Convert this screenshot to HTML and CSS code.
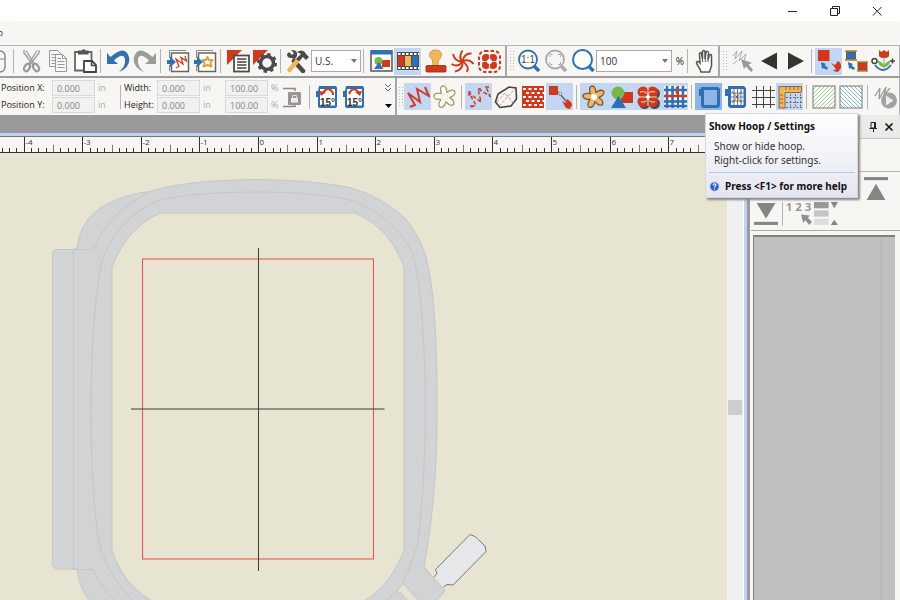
FILE: index.html
```html
<!DOCTYPE html>
<html lang="en">
<head>
<meta charset="utf-8">
<title>Embroidery Designer</title>
<link rel="stylesheet" href="styles.css">
</head>
<body>
<div class="app">
  <header class="titlebar">
    <button class="win-btn" aria-label="Minimize"><svg viewBox="0 0 12 12"><path d="M1 6.500H10" class="win-line"/></svg></button>
    <button class="win-btn" aria-label="Restore"><svg viewBox="0 0 12 12"><path d="M1.500 3.500H8.500V10.500H1.500ZM3.500 3.500V1.500H10.500V8.500H8.500" class="win-line"/></svg></button>
    <button class="win-btn" aria-label="Close"><svg viewBox="0 0 12 12"><path d="M2 2L10.500 10.500M10.500 2L2 10.500" class="win-line"/></svg></button>
  </header>
  <nav class="menubar"><a href="#help">Help</a></nav>

  <div class="toolbar toolbar-main">
    <div class="band band-edit">
      <button class="tool tool-cut-off" aria-label="Select"><svg viewBox="0 0 24 24"><rect x="6" y="2" width="12" height="21" rx="5" fill="#f8f7f4" stroke="#858585" stroke-width="1.400"/><path d="M6 10H18" stroke="#858585"/></svg></button>
      <i class="sep"></i>
      <button class="tool" aria-label="Cut"><svg viewBox="0 0 24 24"><g stroke="#9a9a9a" fill="none"><path d="M5 1L5 4L15 17M20 1L20 4L10 17" stroke-width="1.300"/><path d="M7 1.500L16 16M18 1.500L9 16" stroke-width="1.300"/><ellipse cx="8" cy="18.500" rx="2.500" ry="4" transform="rotate(32 8 18.500)" stroke-width="2.200"/><ellipse cx="17" cy="18.500" rx="2.500" ry="4" transform="rotate(-32 17 18.500)" stroke-width="2.200"/></g></svg></button>
      <button class="tool" aria-label="Copy"><svg viewBox="0 0 24 24"><g fill="#f8f7f4" stroke="#999"><path d="M3.500 1.500H11.500L15.500 5.500V17.500H3.500Z"/><path d="M5.500 5.500H10M5.500 8.500H13M5.500 11.500H13M5.500 14.500H13"/><path d="M9.500 5.500H16.500L20.500 9.500V22.500H9.500Z"/><path d="M16.500 5.500V9.500H20.500M11.500 9.500H15M11.500 12.500H18.500M11.500 15.500H18.500M11.500 18.500H18.500" fill="none"/></g></svg></button>
      <button class="tool" aria-label="Paste"><svg viewBox="0 0 24 24"><path d="M2 3H18.500V21.500H2Z" fill="#fff" stroke="#666" stroke-width="1.800"/><path d="M5 5.500H15.500V1.500H12.500Q10.500-1 8.500 1.500H5Z" fill="#555"/><path d="M11 12H19L23 16V23H11Z" fill="#fff" stroke="#444" stroke-width="1.800"/><path d="M18.500 12V16.500H23" fill="none" stroke="#444" stroke-width="1.500"/></svg></button>
      <i class="sep"></i>
      <button class="tool" aria-label="Undo"><svg viewBox="0 0 24 24"><path d="M1 4V15H12L8 11.500Q17 3 19 10Q20 17 13 23Q25 18 23 8Q19-5 4.500 8Z" fill="#2e6fb5"/></svg></button>
      <button class="tool" aria-label="Redo"><svg viewBox="0 0 24 24"><path d="M23 4V15H12L16 11.500Q7 3 5 10Q4 17 11 23Q-1 18 1 8Q5-5 19.500 8Z" fill="#9b9b9b"/></svg></button>
      <i class="sep"></i>
      <button class="tool" aria-label="Insert design"><svg viewBox="0 0 24 24"><path d="M3.500 9V1.500H20M3.500 16V22" fill="none" stroke="#888"/><path d="M5.500 4H22.500V22.500H5.500Z" fill="#fff" stroke="#666" stroke-width="1.500"/><path d="M10 19L13 17.500L10 10L17 15L15 8.500L20.500 12L19 7" fill="none" stroke="#d1391c" stroke-width="1.300"/><path d="M1 11H4V7.500L10 13L4 18V15H1Z" fill="#2e6fb5"/></svg></button>
      <button class="tool" aria-label="Insert artwork"><svg viewBox="0 0 24 24"><path d="M3.500 9V1.500H20M3.500 16V22" fill="none" stroke="#888"/><path d="M5.500 4H22.500V22.500H5.500Z" fill="#fff" stroke="#666" stroke-width="1.500"/><path d="M14.500 8L16 11L19.500 11L17.500 14L18.500 17.500L14.500 16L10.500 17.500L11.500 14L9.500 11L13 11Z" fill="#fff" stroke="#e0a040" stroke-width="2" stroke-linejoin="round"/><path d="M1 11H4V7.500L10 13L4 18V15H1Z" fill="#2e6fb5"/></svg></button>
      <i class="sep"></i>
      <button class="tool" aria-label="Design properties"><svg viewBox="0 0 24 24"><path d="M1 1H16L1 16Z" fill="#d1391c"/><rect x="8" y="6.500" width="15" height="16" fill="#fff" stroke="#4d4d4d" stroke-width="1.800"/><path d="M11 10H20.500M11 13H20.500M11 16H20.500M11 19H20.500" stroke="#444" stroke-width="1.500"/></svg></button>
      <button class="tool" aria-label="Object settings"><svg viewBox="0 0 24 24"><path d="M0 1H15L0 16Z" fill="#d1391c"/><circle cx="14" cy="14" r="6.500" fill="#f8f7f4" stroke="#4a4a4a" stroke-width="3.600"/><circle cx="14" cy="14" r="8.800" fill="none" stroke="#4a4a4a" stroke-width="2.400" stroke-dasharray="3.400 3.500"/></svg></button>
      <i class="sep"></i>
      <button class="tool" aria-label="Options"><svg viewBox="0 0 24 24"><path d="M8 12L17 22" stroke="#4a4a4a" stroke-width="4.500" stroke-linecap="round"/><path d="M1 5L3 3L6 6L8 4L5 1Q12 0 11 7L9 10L5 9Q1 9 1 5Z" fill="#4a4a4a"/><path d="M13 10L3.500 21" stroke="#f0b65c" stroke-width="4.500" stroke-linecap="round"/><path d="M11 3Q17-1 20 5L23 8L20 11L17 8L13 12L10 10L15 5Z" fill="#4a4a4a"/></svg></button>
      <label class="combo combo-units"><select aria-label="Units"><option>U.S.</option><option>Metric</option></select></label>
      <i class="sep"></i>
      <button class="tool" aria-label="Overview"><svg viewBox="0 0 24 24"><rect x="2" y="2" width="21" height="20" fill="#fff" stroke="#555" stroke-width="1.500"/><rect x="2" y="1" width="21" height="4.500" fill="#2e6fb5"/><rect x="13" y="11" width="8" height="7" fill="#d1391c"/><circle cx="9.500" cy="12" r="4" fill="#7ab648"/><path d="M10 13L14.500 20H5Z" fill="#2e6fb5"/></svg></button>
      <button class="tool tool-on" aria-label="Color film"><svg viewBox="0 0 24 24"><rect x="1" y="3" width="22" height="18" fill="#4d4d4d"/><rect x="2" y="7" width="6" height="10" fill="#d1391c"/><rect x="9" y="7" width="6" height="10" fill="#f0b65c"/><rect x="16" y="7" width="6" height="10" fill="#2e6fb5"/><path d="M2 5H23M2 19H23" stroke="#fff" stroke-width="2" stroke-dasharray="2.500 1.500"/></svg></button>
      <button class="tool" aria-label="Stamp"><svg viewBox="0 0 24 24"><path d="M10 17L9.500 11Q6 8 6.500 5Q8 .5 12.500 1Q18 .8 18.500 5.500Q18.500 9 15.500 11L15 17Z" fill="#f0b65c" stroke="#c98b2f" stroke-width=".7"/><rect x="3" y="16.500" width="20" height="6.500" rx="1" fill="#d1391c" stroke="#96270f" stroke-width=".8"/></svg></button>
      <button class="tool" aria-label="Swirl"><svg viewBox="0 0 24 24"><g fill="none" stroke="#d1391c" stroke-width="2"><path d="M12.500 12.500Q8 8 12.500 1.500"/><path d="M12.500 12.500Q14 4 21.500 4.500"/><path d="M12.500 12.500Q19 9 23.500 15"/><path d="M12.500 12.500Q20 17 17 23"/><path d="M12.500 12.500Q13 21 5 22.500"/><path d="M12.500 12.500Q8 19 1.500 15"/><path d="M12.500 12.500Q5 13 3 5"/></g></svg></button>
      <button class="tool" aria-label="Appliqué"><svg viewBox="0 0 24 24"><rect x="2" y="2" width="21" height="21" rx="6" fill="none" stroke="#d1391c" stroke-width="2" stroke-dasharray="3.500 2"/><g fill="#d1391c"><circle cx="9" cy="9" r="4"/><circle cx="16" cy="9" r="4"/><circle cx="9" cy="16" r="4"/><circle cx="16" cy="16" r="4"/></g><path d="M12.500 5V20M5 12.500H20" stroke="#f6dcd6" stroke-width="1.200"/><circle cx="12.500" cy="12.500" r="2.500" fill="#fff"/></svg></button>
    </div>

    <div class="band band-zoom">
      <i class="grip"></i>
      <button class="tool" aria-label="Zoom 1:1"><svg viewBox="0 0 24 24"><circle cx="11" cy="10.500" r="9" fill="#fff" stroke="#2e6fb5" stroke-width="1.800"/><path d="M17 17L22 22" stroke="#2e6fb5" stroke-width="3.500"/><text x="11" y="14" text-anchor="middle" class="icon-text">1:1</text></svg></button>
      <button class="tool" aria-label="Zoom to fit"><svg viewBox="0 0 24 24"><g stroke="#aaa" fill="none"><circle cx="11" cy="10.500" r="9" stroke-width="1.800"/><path d="M17 17L22 22" stroke-width="3.500"/><path d="M6 8V5.500H8.500M14 5.500H16.500V8M6 13V15.500H8.500M14 15.500H16.500V13"/></g></svg></button>
      <button class="tool" aria-label="Zoom"><svg viewBox="0 0 24 24"><circle cx="11.500" cy="10.500" r="9.500" fill="#fff" stroke="#2e6fb5" stroke-width="2"/><path d="M17.500 17L22.500 22" stroke="#2e6fb5" stroke-width="3.500"/></svg></button>
      <label class="combo combo-zoom"><select aria-label="Zoom factor"><option>100</option><option>200</option></select></label>
      <span class="unit-zoom">%</span>
      <i class="sep"></i>
      <button class="tool" aria-label="Pan"><svg viewBox="0 0 24 24"><path d="M8 23C7 18 3 16 3.500 13Q5 11.500 7 14L6.500 5Q7 2.500 8.500 4.500L9.500 10V2.500Q10.500 .5 12 2.500V10L13 3Q14.500 1.500 15.500 3.500L15 10.500L16.500 6Q18.500 4.500 18.500 7V17L16.500 23Z" fill="#fff" stroke="#555" stroke-width="1.500"/><path d="M9.500 9V13M12.300 9V13M15 9V13" stroke="#555"/></svg></button>
    </div>

    <div class="band band-travel">
      <i class="grip"></i>
      <button class="tool" aria-label="Travel to stitch"><svg viewBox="0 0 24 24"><path d="M3 7L7 2L5 10L12 2L9 12L16 5L14 12M3 15L7 12" fill="none" stroke="#aaa"/><path d="M11 10L22 14L18.500 15.500L23 21L21 23L16 17.500L14 20Z" fill="#999"/></svg></button>
      <button class="tool" aria-label="Previous"><svg viewBox="0 0 24 24"><path d="M4 12L20 3.500V20.500Z" fill="#333"/></svg></button>
      <button class="tool" aria-label="Next"><svg viewBox="0 0 24 24"><path d="M20 12L4 3.500V20.500Z" fill="#333"/></svg></button>
      <i class="sep"></i>
      <button class="tool tool-on" aria-label="Sequence by object"><svg viewBox="0 0 24 24"><rect x="1" y="1" width="11.500" height="11" fill="#d1391c"/><path d="M14 14L18 16L21 12Q25 14 24 19L21 23L16 22L19 20Z" fill="#d1391c"/><path d="M4 13L9 15L7.500 16.500L10.500 18V21L6 19L5 20Z" fill="#2e6fb5"/></svg></button>
      <button class="tool" aria-label="Sequence by color"><svg viewBox="0 0 24 24"><path d="M1 1H13V3H12V10H13V12H1V10H2V3H1Z" fill="#cf9a45"/><rect x="2.500" y="3" width="9" height="7" fill="#2e6fb5" stroke="#555" stroke-width=".8"/><path d="M13 12H24V14H23V21H24V23H13V21H14V14H13Z" fill="#cf9a45"/><rect x="14" y="14" width="9" height="7" fill="#d1391c" stroke="#555" stroke-width=".8"/><path d="M4 13L9 15L7.500 16.500L11 19L10 21L6 19L5 20Z" fill="#2e6fb5"/></svg></button>
      <button class="tool" aria-label="Motif"><svg viewBox="0 0 24 24"><path d="M8 1L10.500 3L13 1L15.500 3L18 1V7Q17 9 13 9Q9 9 8 7Z" fill="#d1391c"/><path d="M13 8V19M13 18Q8 17 7 12Q11 13 13 17Q15 13 19 12Q18 17 13 18Z" fill="#7ab648" stroke="#7ab648"/><circle cx="3.500" cy="12" r="2.500" fill="none" stroke="#444" stroke-width="1.500"/><path d="M19 12H24M21.500 9.500V14.500" stroke="#444" stroke-width="1.500"/><path d="M4 16Q12 26 20 16" fill="none" stroke="#2e6fb5" stroke-width="2"/></svg></button>
    </div>
  </div>

  <div class="toolbar toolbar-view">
    <div class="band band-geometry">
      <div class="fields fields-pos">
        <label for="px">Position X:</label><input id="px" value="0.000"><span>in</span>
        <label for="py">Position Y:</label><input id="py" value="0.000"><span>in</span>
      </div>
      <i class="sep"></i>
      <div class="fields fields-size">
        <label for="w">Width:</label><input id="w" value="0.000"><span>in</span><input value="100.00" aria-label="Width percent"><span>%</span>
        <label for="h">Height:</label><input id="h" value="0.000"><span>in</span><input value="100.00" aria-label="Height percent"><span>%</span>
      </div>
      <button class="tool" aria-label="Lock proportions"><svg viewBox="0 0 24 24"><path d="M2 3.500H14V6M2 21.500H14V19" fill="none" stroke="#888" stroke-width="1.500"/><rect x="7" y="7" width="13" height="13" rx="1" fill="#969696"/><rect x="10" y="13" width="7" height="4.500" fill="#eee"/><path d="M11.500 13V10.500H15.500V13" fill="none" stroke="#ddd"/></svg></button>
      <i class="sep"></i>
      <button class="tool" aria-label="Rotate left 15 degrees"><svg viewBox="0 0 24 24"><path d="M4 1H20Q22 1 22 3V21Q22 23 20 23H5Q3 23 3 21V12H1V6H3Z" fill="#2e6fb5"/><path d="M5 4H20V20.500H5Z" fill="#fff"/><path d="M8 8Q13 0 18 8V10" fill="none" stroke="#d1391c" stroke-width="2"/><path d="M4 6L11 7L6 11Z" fill="#d1391c"/><text x="12.500" y="20.500" text-anchor="middle" class="icon-bold">15°</text></svg></button>
      <button class="tool" aria-label="Rotate right 15 degrees"><svg viewBox="0 0 24 24"><path d="M4 1H20Q22 1 22 3V21Q22 23 20 23H5Q3 23 3 21V12H1V6H3Z" fill="#2e6fb5"/><path d="M5 4H20V20.500H5Z" fill="#fff"/><path d="M7 9Q11 0 17 8" fill="none" stroke="#d1391c" stroke-width="2"/><path d="M13 7L20 6L18 11Z" fill="#d1391c"/><text x="12.500" y="20.500" text-anchor="middle" class="icon-bold">15°</text></svg></button>
      <button class="overflow" aria-label="More buttons"><svg viewBox="0 0 8 28"><path d="M1 1L4 4L7 1M1 5L4 8L7 5" fill="none" stroke="#666"/><path d="M1 21H8L4.500 25Z" fill="#000"/></svg></button>
    </div>

    <div class="band band-show">
      <i class="grip"></i>
      <button class="tool tool-on" aria-label="Show stitches"><svg viewBox="0 0 24 24"><path d="M4 22L9 20L2 8L14 17L11 4L23 11L19 2" fill="none" stroke="#c8402a" stroke-width="2"/></svg></button>
      <button class="tool" aria-label="Show artistic view"><svg viewBox="0 0 24 24"><g fill="#fff" stroke="#b09566" stroke-width="1.400"><ellipse cx="12" cy="5.500" rx="3" ry="4.700" transform="rotate(-12 12 12)"/><ellipse cx="12" cy="5.500" rx="3" ry="4.700" transform="rotate(60 12 12)"/><ellipse cx="12" cy="5.500" rx="3" ry="4.700" transform="rotate(132 12 12)"/><ellipse cx="12" cy="5.500" rx="3" ry="4.700" transform="rotate(204 12 12)"/><ellipse cx="12" cy="5.500" rx="3" ry="4.700" transform="rotate(276 12 12)"/></g><circle cx="12" cy="12" r="4.500" fill="#fff"/><circle cx="12" cy="12" r="3" fill="none" stroke="#efe2cb"/></svg></button>
      <i class="sep"></i>
      <button class="tool tool-on" aria-label="Show needle points"><svg viewBox="0 0 24 24"><path d="M4 22L9 20L2 8L14 17L11 4L23 11L19 2" fill="none" stroke="#c8402a" stroke-width="1.500" stroke-dasharray="4 2"/><path d="M3 21H6M18 2H22M2 11V7H4M11 4H14" stroke="#c8402a" stroke-width="1.500" fill="none"/></svg></button>
      <button class="tool" aria-label="Show outlines"><svg viewBox="0 0 24 24"><path d="M1.500 17L4 9L15 2L22 3L22.500 14L17 21L6 22.500Z" fill="none" stroke="#444" stroke-width="1.600"/><path d="M3 17L11 8L20 19M5 21L21 4" fill="none" stroke="#df8b79" stroke-dasharray="3 1.500"/></svg></button>
      <button class="tool" aria-label="Show pattern fill"><svg viewBox="0 0 24 24"><rect x="1" y="1" width="22" height="22" fill="#d1391c"/><path d="M2 4H23M2 12H23M2 20H23" stroke="#fff" stroke-width="2" stroke-dasharray="3 2.500"/><path d="M5 8H23M5 16H23" stroke="#fff" stroke-width="2" stroke-dasharray="3 2.500"/></svg></button>
      <button class="tool tool-on" aria-label="Show connectors"><svg viewBox="0 0 24 24"><rect x="1" y="1" width="9" height="9" fill="#d1391c"/><path d="M10 7L19 17" stroke="#666" stroke-width="1.500"/><path d="M10 7L14 8L12 11Z" fill="#fff" stroke="#777" stroke-width=".8"/><path d="M14 16L18 18L19 14Q24 17 24 20L22 24L18 23Z" fill="#d1391c"/></svg></button>
      <i class="sep"></i>
      <button class="tool tool-on" aria-label="Show motifs"><svg viewBox="0 0 24 24"><g fill="#f0b65c" stroke="#6d5a3c" stroke-width="1.300"><ellipse cx="12" cy="5.500" rx="3" ry="4.700" transform="rotate(-12 12 12)"/><ellipse cx="12" cy="5.500" rx="3" ry="4.700" transform="rotate(60 12 12)"/><ellipse cx="12" cy="5.500" rx="3" ry="4.700" transform="rotate(132 12 12)"/><ellipse cx="12" cy="5.500" rx="3" ry="4.700" transform="rotate(204 12 12)"/><ellipse cx="12" cy="5.500" rx="3" ry="4.700" transform="rotate(276 12 12)"/></g><circle cx="12" cy="12" r="4.500" fill="#f0b65c"/><circle cx="12" cy="12" r="3" fill="#fff"/></svg></button>
      <button class="tool tool-on" aria-label="Show shapes"><svg viewBox="0 0 24 24"><rect x="12" y="7" width="12" height="11" fill="#d1391c"/><circle cx="9" cy="8" r="6.500" fill="#7ab648"/><path d="M9.500 11L17 23H2Z" fill="#2e6fb5"/></svg></button>
      <button class="tool tool-on" aria-label="Show appliqué"><svg viewBox="0 0 24 24"><g fill="#4a4a4a"><circle cx="18.500" cy="8.500" r="5.500"/><circle cx="8.500" cy="18.500" r="5.500"/><circle cx="18.500" cy="18.500" r="5.500"/></g><g fill="#d1391c"><circle cx="7" cy="7" r="5.500"/><circle cx="16.500" cy="7" r="5.500"/><circle cx="7" cy="16.500" r="5.500"/><circle cx="16.500" cy="16.500" r="5.500"/></g><path d="M12 3V21M3 12H21M4 7Q12 5 12 12Q12 18 19 17M19 7Q12 5 12 12Q12 18 5 17" stroke="#f5d9d3" stroke-width="1" fill="none"/><circle cx="12" cy="12" r="2" fill="#fff"/></svg></button>
      <button class="tool tool-on" aria-label="Show fabric"><svg viewBox="0 0 24 24"><rect x="1" y="1" width="23" height="22" fill="#fff"/><path d="M4 1V23M9.500 1V23M20 1V23M1 5H24M1 16.500H24M1 21H24" stroke="#2e6fb5" stroke-width="2.500"/><path d="M15 1V23" stroke="#2e6fb5" stroke-width="2"/><path d="M14 2V9M1 11H24" stroke="#d1391c" stroke-width="2.500"/></svg></button>
      <i class="sep"></i>
      <div class="tip-anchor">
        <button class="tool tool-hot" aria-label="Show hoop" aria-describedby="hoop-tip"><svg viewBox="0 0 24 24"><path d="M4 2H21L23 4V21L21 23H6L4 21V11H2V4H4Z" fill="#2e6fb5"/><rect x="7" y="5" width="13" height="15" rx="1" fill="#8fb4e6"/></svg></button>
        <div class="tooltip" id="hoop-tip" role="tooltip">
          <strong class="tip-title">Show Hoop / Settings</strong>
          <p class="tip-body">Show or hide hoop.<br>Right-click for settings.</p>
          <div class="tip-help"><svg viewBox="0 0 12 12"><circle cx="6" cy="6" r="5.500" fill="#b9cdf2"/><circle cx="6" cy="6" r="4.500" fill="#2b5fce"/><path d="M4.300 4.800Q4.500 3 6 3Q8 3.200 7.500 4.800Q6 5.500 6 7M6 8V9.300" fill="none" stroke="#fff" stroke-width="1.200"/></svg><strong>Press &lt;F1&gt; for more help</strong></div>
        </div>
      </div>
      <button class="tool" aria-label="Show hoop template"><svg viewBox="0 0 24 24"><path d="M4 1H20L22 3V21L20 23H6L4 21V11H1V4H4Z" fill="#2e6fb5"/><rect x="7" y="4" width="12.500" height="16" fill="#fff"/><path d="M7 8H19.500M7 12H19.500M7 16H19.500M10 4V20M13.500 4V20M17 4V20M8 6L18 18M18 6L8 18" stroke="#555" stroke-width=".8"/></svg></button>
      <button class="tool" aria-label="Show grid"><svg viewBox="0 0 24 24"><path d="M5.500 1V23M12.500 1V23M19.500 1V23M1 5.500H24M1 12.500H24M1 19.500H24" stroke="#444"/></svg></button>
      <button class="tool tool-on" aria-label="Show rulers"><svg viewBox="0 0 24 24"><path d="M1 1.500H23.500V7.500H7V23H1Z" fill="#f0b65c" stroke="#8a6a35"/><path d="M8 2V5M12 2V5M16 2V5M20 2V5M2 10H5M2 14H5M2 18H5" stroke="#8a6a35"/><path d="M12.500 9V23M17.500 9V23M22.500 9V23M8 12.500H24M8 17.500H24M8 22.500H24" stroke="#555" stroke-dasharray="2 1.500" stroke-width=".8"/></svg></button>
      <i class="sep"></i>
      <button class="tool" aria-label="Green hatch"><svg viewBox="0 0 24 24"><rect x="1" y="1" width="22" height="22" fill="#fff"/><path d="M1 5L5 1M1 9L9 1M1 13L13 1M1 17L17 1M1 21L21 1M3 23L23 3M7 23L23 7M11 23L23 11M15 23L23 15M19 23L23 19" stroke="#a5cf86"/><rect x="1" y="1" width="22" height="22" fill="none" stroke="#777"/></svg></button>
      <button class="tool" aria-label="Blue hatch"><svg viewBox="0 0 24 24"><rect x="1" y="1" width="22" height="22" fill="#fff"/><path d="M23 5L19 1M23 9L15 1M23 13L11 1M23 17L7 1M23 21L3 1M21 23L1 3M17 23L1 7M13 23L1 11M9 23L1 15M5 23L1 19" stroke="#82bdcf"/><rect x="1" y="1" width="22" height="22" fill="none" stroke="#777"/></svg></button>
      <i class="sep"></i>
      <button class="tool" aria-label="Stitch player"><svg viewBox="0 0 24 24"><path d="M2 11L7 3L6 14L13 2L11 10L17 3" fill="none" stroke="#999" stroke-width="1.300"/><circle cx="16" cy="15.500" r="8" fill="#a3a3a3"/><path d="M13 10.500L20.500 15.500L13 20.500Z" fill="#eee"/></svg></button>
    </div>
  </div>

  <main class="workspace">
    <section class="document">
      <div class="doc-gap"></div>
      <div class="doc-frame">
        <div class="doc-main">
          <svg class="ruler" id="ruler" aria-label="Horizontal ruler"></svg>
          <div class="doc-body">
            <svg class="canvas" aria-label="Design canvas">
              <g transform="translate(0 -153)">
                <g fill="#d2d3d5" stroke="#c5c6c8">
                  <path d="M77 250Q79 219 107 204Q126 194 150 191.500Q185 180 258 179.500Q310 180 350 187.500Q380 196 404 217Q419 234 426 257C437 300 437 370 437 409C437 449 436 500 424 567L445 591L436 601H418L404 583Q396 595 382 605H93Q79 590 77 569H56L52.500 566V252L54.500 249.500H73L77 248ZM161 213Q128 226 112 267V550Q120 575 136 589T161 605H355Q388 592 404 550V267Q390 228 355 213Z" fill-rule="evenodd"/>
                  <g fill="none">
                    <path d="M73.500 249V569M73.500 249.500H92Q95 248 99 239Q111 212 150 191.500M73.500 569.500H93Q100 586 115 600"/>
                    <path d="M258 192Q195 192 160 200Q120 216 103 257Q98 275 94 320Q91 360 91 409Q91 460 94 500Q97 537 101 550Q110 577 133 601M258 192Q320 192 353 201Q393 216 412 252Q417 265 421 305Q425.500 360 425.500 409Q425 480 419 534Q417 553 404 580"/>
                  </g>
                  <path d="M386 601L396 591.500L401 593L408 601Z"/>
                  <path d="M404 583L421 601H411L399 590Z" fill="#e7e4d1" stroke="none"/>
                  <path d="M403.500 579L424 568L445 591L436 601H419L403.500 584Z"/>
                  <path d="M405 577L421 560L424 569L410 580Z" stroke="none"/>
                </g>
                <path d="M435.500 569.500L434.500 575.500L443.500 587L447 584.500L453 585L486 551.500L485 546L475 536.500L470 534.500L435.500 569.500Z" fill="#e6e7e9"/>
                <path d="M434 577L437 573.500L435.500 569.500L470 534.500L475 536.500L485 546L486 551.500L453 585L447 584.500L443.500 587" fill="none" stroke="#77797a" stroke-width="1"/>
                <rect x="142.500" y="259" width="231" height="300" fill="none" stroke="#f04b48"/>
                <path d="M258.500 248V571" stroke="#3c3c3a"/>
                <path d="M131 409H384.500" stroke="#3c3c3a"/>
              </g>
            </svg>
            <div class="scrollbar"><div class="thumb"></div></div>
          </div>
        </div>
      </div>
    </section>

    <aside class="panel">
      <header class="panel-head">
        <button aria-label="Pin"><svg viewBox="0 0 10 10"><path d="M3 .5H7.500V6H3ZM6.500 1V6M1.500 6.500H9M5.500 6.500V10" fill="none" stroke="#222"/></svg></button>
        <button aria-label="Close panel"><svg viewBox="0 0 10 10"><path d="M1.500 1.500L8.500 8.500M8.500 1.500L1.500 8.500" stroke="#111" stroke-width="1.600"/></svg></button>
      </header>
      <div class="panel-tabs"></div>
      <div class="panel-tools">
        <div class="panel-row panel-row-top">
          <button class="seq" aria-label="Move to start"><svg viewBox="0 0 24 24"><path d="M1 2.500H24" stroke="#858585" stroke-width="3"/><path d="M12.500 7.500L21.500 23H3.500Z" fill="#858585"/></svg></button>
        </div>
        <div class="panel-row">
          <button class="seq" aria-label="Move to end"><svg viewBox="0 0 24 24"><path d="M12.500 17L21.500 2H3.500Z" fill="#858585"/><path d="M1 21.500H24" stroke="#858585" stroke-width="3"/></svg></button>
          <i class="sep"></i>
          <button class="seq" aria-label="Sequence by selects"><svg viewBox="0 0 24 24"><text x="11" y="10" text-anchor="middle" class="icon-digits">1 2 3</text><path d="M13.500 13L22 14L20 16L24 20L21.500 23L17.500 18.500L15.500 21Z" fill="#909090"/></svg></button>
          <button class="seq" aria-label="Sequence by color"><svg viewBox="0 0 24 24"><rect x="0" y="1" width="14" height="6" fill="#999"/><rect x="0" y="9" width="14" height="6" fill="#c6c6c6"/><rect x="0" y="17" width="14" height="6" fill="#dedede"/><path d="M16 1H23L19.500 7ZM16 23H23L19.500 18Z" fill="#858585"/></svg></button>
        </div>
      </div>
      <div class="sequence-list"><div class="list-edge"></div></div>
    </aside>
  </main>
</div>
<script src="ruler.js"></script>
</body>
</html>
```
FILE: styles.css
```css
* { box-sizing: border-box; }

body {
  margin: 0;
  background: #f8f6f2;
  color: #222;
  font: 9px/14px "Open Sans", "Noto Sans", sans-serif;
}

button, input, select { font: inherit; color: inherit; }
button { padding: 0; border: 0; background: none; flex: none; }
svg { display: block; }

.app { display: flex; flex-direction: column; height: 100vh; overflow: hidden; }

.titlebar { display: flex; justify-content: flex-end; height: 21px; background: #fff; padding-right: 2px; flex: none; }
.win-btn { display: grid; place-items: center; width: 42px; }
.win-btn svg { width: 12px; height: 12px; }
.win-line { fill: none; stroke: #222; }

.menubar { display: flex; justify-content: flex-end; align-items: center; width: 3px; height: 24px; flex: none; }
.menubar a { color: #333; text-decoration: none; }

.toolbar { display: flex; flex: none; border-top: 1px solid #b4b4b4; }
.toolbar-main { height: 31px; }
.toolbar-view { height: 39px; border-top: 2px solid #9c9c9c; }

.band { display: flex; align-items: center; flex: none; border-right: 2px solid #a8a8a8; }
.band-edit { width: 507px; }
.band-zoom { width: 213px; }
.band-travel, .band-show { flex: 1; border-right: 1px solid #b4b4b4; }
.band-geometry { width: 397px; padding-left: 1px; }

.tool { display: grid; place-items: center; width: 27px; height: 27px; }
.tool svg { width: 24px; height: 24px; }
.tool-cut-off { width: 11px; justify-content: end; }
.tool-on { background: #c3d6f2; }
.tool-hot { background: #8fb4e6; }

.sep { display: block; flex: none; width: 1px; height: 24px; margin: 0 3px; background: #b4b4b4; }
.band-edit .sep, .band-travel .sep { margin: 0 3px 0 2px; }
.grip { flex: none; width: 6px; height: 22px; margin-left: 2px; background: radial-gradient(circle, #b8b8b8 1px, transparent 1px) 0 0 / 3px 3px; }
.band-show .grip { margin-left: 1px; }

.combo { display: flex; flex: none; position: relative; }
.combo select {
  width: 100%; height: 22px; padding: 0 6px 0 3px; appearance: none;
  border: 1px solid #aaa; border-radius: 0; background: #fff; color: #333; font-size: 10px;
}
.combo::after {
  content: ""; position: absolute; right: 4px; top: 9px; pointer-events: none;
  border: 3px solid transparent; border-top: 4px solid #777; border-bottom: 0;
}
.combo-units { width: 50px; }
.combo-zoom { width: 76px; }
.unit-zoom { width: 12px; text-align: right; font-size: 10px; }

.icon-text { font: 10px "Liberation Sans", sans-serif; fill: #444; }
.icon-bold { font: bold 10px "Liberation Sans", sans-serif; fill: #333; }
.icon-digits { font: bold 11px "Open Sans", sans-serif; fill: #999; }

.fields { display: grid; align-items: center; row-gap: 1px; flex: none; }
.fields-pos { grid-template-columns: 51px 43px 22px; }
.fields-size { grid-template-columns: 33px 43px 25px 43px 11px; }
.fields input {
  width: 43px; height: 16px; padding: 0 4px; border: 1px solid #dadada; border-radius: 0;
  background: #f1f1f0; color: #858585;
}
.fields span { padding-left: 3px; color: #aaa; }
.overflow { margin-left: 17px; }
.overflow svg { width: 8px; height: 28px; }

.tip-anchor { position: relative; }
.tooltip {
  position: absolute; left: 10px; top: 30px; z-index: 5; width: 153px; padding: 5px 2px 4px 3px;
  background: linear-gradient(#fff, #e4e5f0); border: 1px solid #d8d8dc;
  box-shadow: 2px 2px 2px #888; color: #333; font: 10px/14px "Noto Sans", sans-serif; white-space: nowrap;
}
.tip-title { display: block; color: #111; }
.tip-body { margin: 6px 0 0; padding: 0 0 5px 5px; border-bottom: 1px solid #b3cce8; }
.tip-help { display: flex; align-items: center; gap: 5px; margin-top: 6px; color: #111; }
.tip-help svg { width: 11px; height: 11px; flex: none; }

.workspace { display: flex; flex: 1; min-height: 0; }
.document { display: flex; flex-direction: column; flex: 1; min-width: 0; }
.doc-gap { height: 18px; background: #9a9a9a; flex: none; }
.doc-frame {
  display: flex; flex: 1; min-height: 0; border-top: 3px solid #bdd0f0;
  border-right: 3px solid #bdd3f5;
}
.doc-main { display: flex; flex-direction: column; flex: 1; min-width: 0; }
.ruler { width: 100%; height: 17px; background: #f8f6f2; flex: none; border-top: 1px solid #777; }
.ruler text { font: 8px "Open Sans", sans-serif; fill: #333; }
.doc-body { display: flex; flex: 1; min-height: 0; }
.canvas { flex: 1; min-width: 0; height: 100%; background: #e7e4d1; }
.scrollbar { width: 17px; background: #f0f0f0; border-right: 1px solid #fff; border-left: 1px solid #f5f3ee; padding-top: 247px; }
.thumb { height: 15px; margin-right: 1px; background: #cdcdcd; }

.panel { display: flex; flex-direction: column; width: 153px; border-left: 3px solid #999; flex: none; }
.panel-head { display: flex; justify-content: flex-end; gap: 6px; align-items: center; height: 24px; padding-right: 6px; background: #eceae6; border-bottom: 1px solid #c4c4c4; }
.panel-head svg { width: 10px; height: 10px; }
.panel-tabs { height: 33px; border-bottom: 1px solid #b4b4b4; }
.panel-tools { display: flex; flex-direction: column; border-bottom: 1px solid #aaa; margin-left: 1px; padding: 4px 0; }
.panel-row { display: flex; align-items: center; gap: 2px; padding-left: 2px; }
.panel-row-top { justify-content: flex-end; padding-right: 12px; }
.panel-row .sep { margin: 0 2px; }
.seq svg { width: 25px; height: 25px; overflow: visible; }
.sequence-list { display: flex; justify-content: flex-end; flex: 1; margin: 4px 5px 0 3px; background: #c0c0c0; border: solid #808080; border-width: 2px 0 0 1px; }
.list-edge { width: 15px; border-left: 2px solid #bababa; }
```
FILE: ruler.js
```js
const ruler = document.getElementById("ruler");
const ns = "http://www.w3.org/2000/svg";
const zero = 258.5;
const inch = 58.6;

function add(name, attrs, text) {
  const el = document.createElementNS(ns, name);
  for (const key in attrs) el.setAttribute(key, attrs[key]);
  if (text !== undefined) el.textContent = text;
  ruler.appendChild(el);
}

const end = ruler.clientWidth;
const labelEnd = end - 20;
for (let i = -36; zero + i * inch / 8 < end; i++) {
  const x = Math.floor(zero + i * inch / 8) + 0.5;
  const major = i % 8 === 0;
  const top = major ? 0 : i % 4 === 0 ? 8 : 11;
  add("line", { x1: x, x2: x, y1: top, y2: 16, stroke: i % 4 === 0 && !major ? "#777" : "#333" });
  if (major && x < labelEnd) add("text", { x: x + 1, y: 8 }, i / 8);
}
add("line", { x1: 0, x2: end, y1: 15.5, y2: 15.5, stroke: "#333" });
```
